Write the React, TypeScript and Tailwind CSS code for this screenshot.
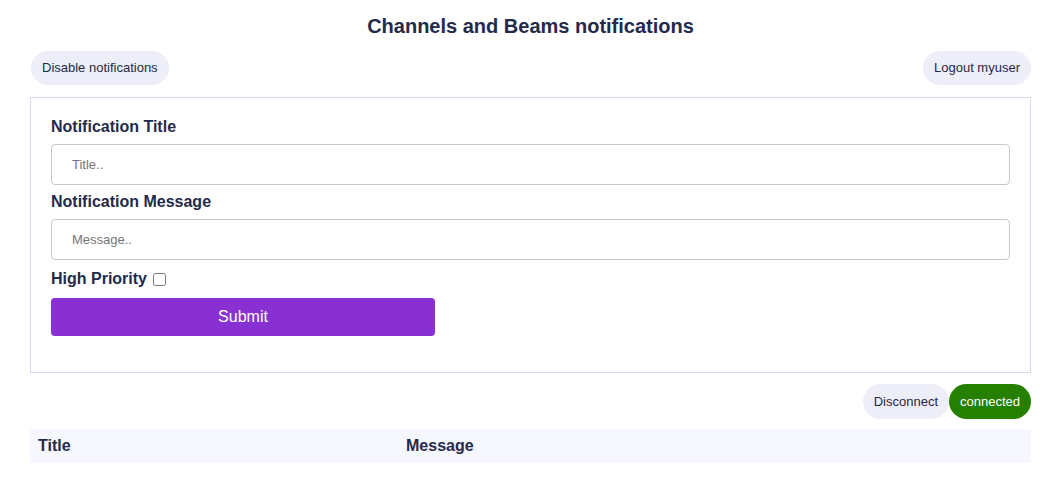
import React from "react";

export default function App() {
  return (
    <div className="min-h-screen bg-white text-[#242a4a]" style={{ fontFamily: '"Liberation Sans", Arial, sans-serif' }}>
      <div className="pl-[30px] pr-[29px] pt-[14px]">
        <h1 className="text-center text-[20px] font-bold leading-[24px]">Channels and Beams notifications</h1>
        <div className="mt-[13px] flex items-center justify-between">
          <button className="ml-px h-[34px] rounded-full bg-[#eeeef9] px-[11px] text-[13px] text-[#242a4a]">Disable notifications</button>
          <button className="h-[34px] rounded-full bg-[#eeeef9] px-[11px] text-[13px] text-[#242a4a]">Logout myuser</button>
        </div>
        <div className="mt-[12px] border border-[#d9d9ee] px-[20px] pt-[19px] pb-[36px]">
          <label className="block text-[16px] font-bold leading-[20px]">Notification Title</label>
          <input
            className="mt-[7px] block h-[41px] w-full rounded-[4px] border border-[#c8c8c8] px-[20px] text-[13px] outline-none placeholder:text-[#757575]"
            placeholder="Title.."
          />
          <label className="mt-[7px] block text-[16px] font-bold leading-[20px]">Notification Message</label>
          <input
            className="mt-[7px] block h-[41px] w-full rounded-[4px] border border-[#c8c8c8] px-[20px] text-[13px] outline-none placeholder:text-[#757575]"
            placeholder="Message.."
          />
          <div className="mt-[9px] flex items-center">
            <span className="text-[16px] font-bold leading-[20px]">High Priority</span>
            <input type="checkbox" className="ml-[6px] h-[13px] w-[13px]" />
          </div>
          <button className="mt-[9px] block h-[38px] w-[384px] rounded-[4px] bg-[#8830d2] text-[16px] text-white">Submit</button>
        </div>
        <div className="mt-[11px] flex justify-end">
          <button className="h-[35px] rounded-full bg-[#eeeef9] px-[11px] text-[13px] text-[#242a4a]">Disconnect</button>
          <button className="h-[35px] rounded-full bg-[#258000] px-[11px] text-[13px] text-white">connected</button>
        </div>
        <table className="mt-[10px] w-full border-collapse">
          <thead>
            <tr className="bg-[#f7f7ff]">
              <th className="h-[34px] w-[376px] px-[8px] text-left text-[16px] font-bold">Title</th>
              <th className="h-[34px] px-0 text-left text-[16px] font-bold">Message</th>
            </tr>
          </thead>
        </table>
      </div>
    </div>
  );
}
